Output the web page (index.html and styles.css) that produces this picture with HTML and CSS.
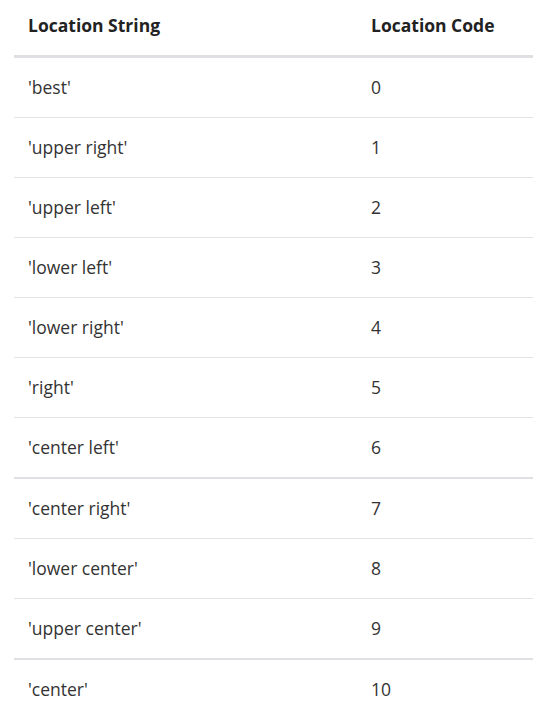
FILE: index.html
```html
<!DOCTYPE html>
<html>
<head>
<meta charset="utf-8">
<link rel="stylesheet" href="styles.css">
</head>
<body>
<table class="loc-table">
  <thead>
    <tr><th class="col-str">Location String</th><th>Location Code</th></tr>
  </thead>
  <tbody>
    <tr><td>'best'</td><td>0</td></tr>
    <tr><td>'upper right'</td><td>1</td></tr>
    <tr><td>'upper left'</td><td>2</td></tr>
    <tr><td>'lower left'</td><td>3</td></tr>
    <tr><td>'lower right'</td><td>4</td></tr>
    <tr><td>'right'</td><td>5</td></tr>
    <tr class="thick"><td>'center left'</td><td>6</td></tr>
    <tr><td>'center right'</td><td>7</td></tr>
    <tr><td>'lower center'</td><td>8</td></tr>
    <tr class="thick"><td>'upper center'</td><td>9</td></tr>
    <tr><td>'center'</td><td>10</td></tr>
  </tbody>
</table>
</body>
</html>
```
FILE: styles.css
```css
html, body {
  margin: 0;
  padding: 0;
  background: #fff;
}
body {
  font-family: "Open Sans", "Noto Sans", sans-serif;
  font-size: 17.5px;
  color: #333;
}
.loc-table {
  margin-left: 14px;
  width: 519px;
  border-collapse: collapse;
}
.loc-table th {
  text-align: left;
  font-weight: 700;
  color: #222;
  height: 56px;
  padding: 0 14px 5px;
  box-sizing: border-box;
  border-bottom: 3px solid #dee0e4;
  vertical-align: middle;
}
.loc-table .col-str {
  width: 343px;
}
.loc-table td {
  height: 59px;
  padding: 0 14px;
  border-bottom: 1px solid #e3e3e3;
  vertical-align: middle;
}
.loc-table tr.thick td {
  border-bottom: 2px solid #dee0e4;
}
.loc-table tbody tr:last-child td {
  border-bottom: none;
}
```
